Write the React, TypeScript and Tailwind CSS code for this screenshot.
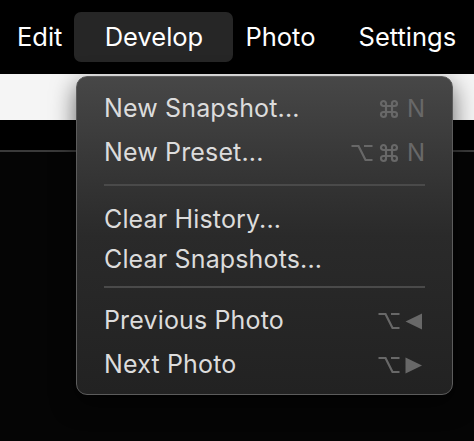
import React from "react";

const font = { fontFamily: "Inter, 'Noto Sans', 'DejaVu Sans', sans-serif" };

function Item({ label, shortcut, h }: { label: string; shortcut?: React.ReactNode; h: string }) {
  return (
    <div className={`flex items-center justify-between ${h}`}>
      <span className="text-[25px] text-[#dcdcdc] tracking-[0.15px]">{label}</span>
      <span className="text-[24px] text-[#686868] flex items-center">{shortcut}</span>
    </div>
  );
}

function Sep({ cls }: { cls: string }) {
  return <div className={`h-[2px] bg-[#4a4a4a] ${cls}`} />;
}

function Opt({ cls }: { cls?: string }) {
  return (
    <svg className={cls} width="22" height="18" viewBox="0 0 22 18" fill="none" stroke="#686868" strokeWidth="2.2">
      <path d="M0.5 2 H7.5 L14.5 16 H21.5 M13 2 H21.5" />
    </svg>
  );
}
function Cmd({ cls }: { cls?: string }) {
  return (
    <svg className={cls} width="20" height="20" viewBox="0 0 20 20" fill="none" stroke="#686868" strokeWidth="2.2">
      <path d="M7 7 H13 V13 H7 Z M7 7 V4.5 A2.5 2.5 0 1 0 4.5 7 H7 M13 7 V4.5 A2.5 2.5 0 1 1 15.5 7 H13 M7 13 V15.5 A2.5 2.5 0 1 1 4.5 13 H7 M13 13 V15.5 A2.5 2.5 0 1 0 15.5 13 H13" />
    </svg>
  );
}
function Tri({ dir }: { dir: "l" | "r" }) {
  return (
    <svg className="ml-[5px] mr-[3px]" width="17" height="17" viewBox="0 0 17 17" fill="#686868">
      {dir === "l" ? <path d="M17 0.5 V16.5 L0.5 8.5 Z" /> : <path d="M0.5 0.5 V16.5 L17 8.5 Z" />}
    </svg>
  );
}

export default function App() {
  return (
    <div className="w-[474px] h-[441px] bg-[#050505] relative overflow-hidden" style={font}>
      <div className="h-[74px] bg-black pt-[12px]">
        <div className="flex items-center h-[50px]">
          <span className="text-[25.5px] text-white pl-[17px] pr-[12px]">Edit</span>
          <span className="text-[25.5px] text-white h-[50px] w-[159px] flex items-center justify-center rounded-[7px] bg-[#262626]">Develop</span>
          <span className="text-[25.5px] text-white pl-[12px] pr-[43px]">Photo</span>
          <span className="text-[25.5px] text-white">Settings</span>
        </div>
      </div>
      <div className="h-[46px] bg-[#f5f5f5]" />
      <div className="h-[30px] bg-black" />
      <div className="h-[2px] bg-[#3a3a3a]" />

      <div className="absolute left-[76px] top-[76px] w-[377px] h-[319px] rounded-[11px] border-[1.5px] border-[#5c5c5c] bg-gradient-to-b from-[#474747] via-[#2a2a2a] to-[#222222] shadow-[0_8px_24px_rgba(0,0,0,0.6)] pl-[27px] pr-[27px] pt-[10px]">
        <Item h="h-[44px]" label="New Snapshot..." shortcut={<><Cmd cls="mr-[8px]" /><span>N</span></>} />
        <Item h="h-[44px]" label="New Preset..." shortcut={<><Opt cls="mr-[6px]" /><Cmd cls="mr-[8px]" /><span>N</span></>} />
        <Sep cls="mt-[9px] mb-[14px]" />
        <Item h="h-[40px]" label="Clear History..." />
        <Item h="h-[40px]" label="Clear Snapshots..." />
        <Sep cls="mt-[6px] mb-[11px]" />
        <Item h="h-[44px]" label="Previous Photo" shortcut={<><Opt /><Tri dir="l" /></>} />
        <Item h="h-[44px]" label="Next Photo" shortcut={<><Opt /><Tri dir="r" /></>} />
      </div>
    </div>
  );
}
